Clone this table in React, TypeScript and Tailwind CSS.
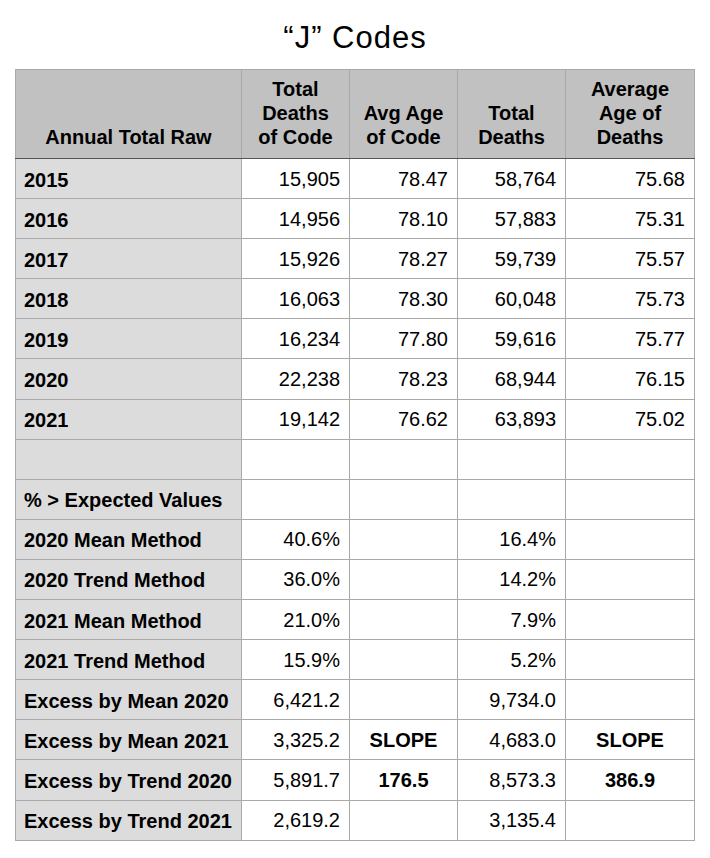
const header = ["Total\nDeaths\nof Code", "Avg Age\nof Code", "Total\nDeaths", "Average\nAge of\nDeaths"];

type Cell = string | { v: string; bold: true };

const rows: [string, Cell, Cell, Cell, Cell][] = [
  ["2015", "15,905", "78.47", "58,764", "75.68"],
  ["2016", "14,956", "78.10", "57,883", "75.31"],
  ["2017", "15,926", "78.27", "59,739", "75.57"],
  ["2018", "16,063", "78.30", "60,048", "75.73"],
  ["2019", "16,234", "77.80", "59,616", "75.77"],
  ["2020", "22,238", "78.23", "68,944", "76.15"],
  ["2021", "19,142", "76.62", "63,893", "75.02"],
  ["", "", "", "", ""],
  ["% > Expected Values", "", "", "", ""],
  ["2020 Mean Method", "40.6%", "", "16.4%", ""],
  ["2020 Trend Method", "36.0%", "", "14.2%", ""],
  ["2021 Mean Method", "21.0%", "", "7.9%", ""],
  ["2021 Trend Method", "15.9%", "", "5.2%", ""],
  ["Excess by Mean 2020", "6,421.2", "", "9,734.0", ""],
  ["Excess by Mean 2021", "3,325.2", { v: "SLOPE", bold: true }, "4,683.0", { v: "SLOPE", bold: true }],
  ["Excess by Trend 2020", "5,891.7", { v: "176.5", bold: true }, "8,573.3", { v: "386.9", bold: true }],
  ["Excess by Trend 2021", "2,619.2", "", "3,135.4", ""],
];

function ValueCell({ cell }: { cell: Cell }) {
  if (typeof cell === "string") {
    return <td className="border border-[#a9a9a9] pr-[9px] text-right">{cell}</td>;
  }
  return <td className="border border-[#a9a9a9] text-center font-bold">{cell.v}</td>;
}

export default function App() {
  return (
    <div className="min-h-[858px] bg-white font-['Liberation_Sans',Arial,sans-serif] text-black">
      <h1 className="pt-[22px] text-center text-[31px] leading-[31px] tracking-[1px]">“J” Codes</h1>

      <table className="mt-[16px] ml-[15px] w-[679px] table-fixed border-collapse text-[20px] leading-[24px]">
        <colgroup>
          <col className="w-[226px]" />
          <col className="w-[108px]" />
          <col className="w-[108px]" />
          <col className="w-[108px]" />
          <col className="w-[129px]" />
        </colgroup>
        <thead>
          <tr className="h-[89px] bg-[#c1c1c1] font-bold">
            <th className="border border-[#a9a9a9] border-b-[#555] pb-[9px] align-bottom">Annual Total Raw</th>
            {header.map((h) => (
              <th key={h} className="whitespace-pre-line border border-[#a9a9a9] border-b-[#555] pb-[9px] align-bottom">
                {h}
              </th>
            ))}
          </tr>
        </thead>
        <tbody>
          {rows.map((r, i) => (
            <tr key={i} className="h-[40.1px]">
              <td className="border border-[#a9a9a9] bg-[#dcdcdc] pl-[8px] pt-[2px] font-bold">{r[0]}</td>
              <ValueCell cell={r[1]} />
              <ValueCell cell={r[2]} />
              <ValueCell cell={r[3]} />
              <ValueCell cell={r[4]} />
            </tr>
          ))}
        </tbody>
      </table>
    </div>
  );
}
